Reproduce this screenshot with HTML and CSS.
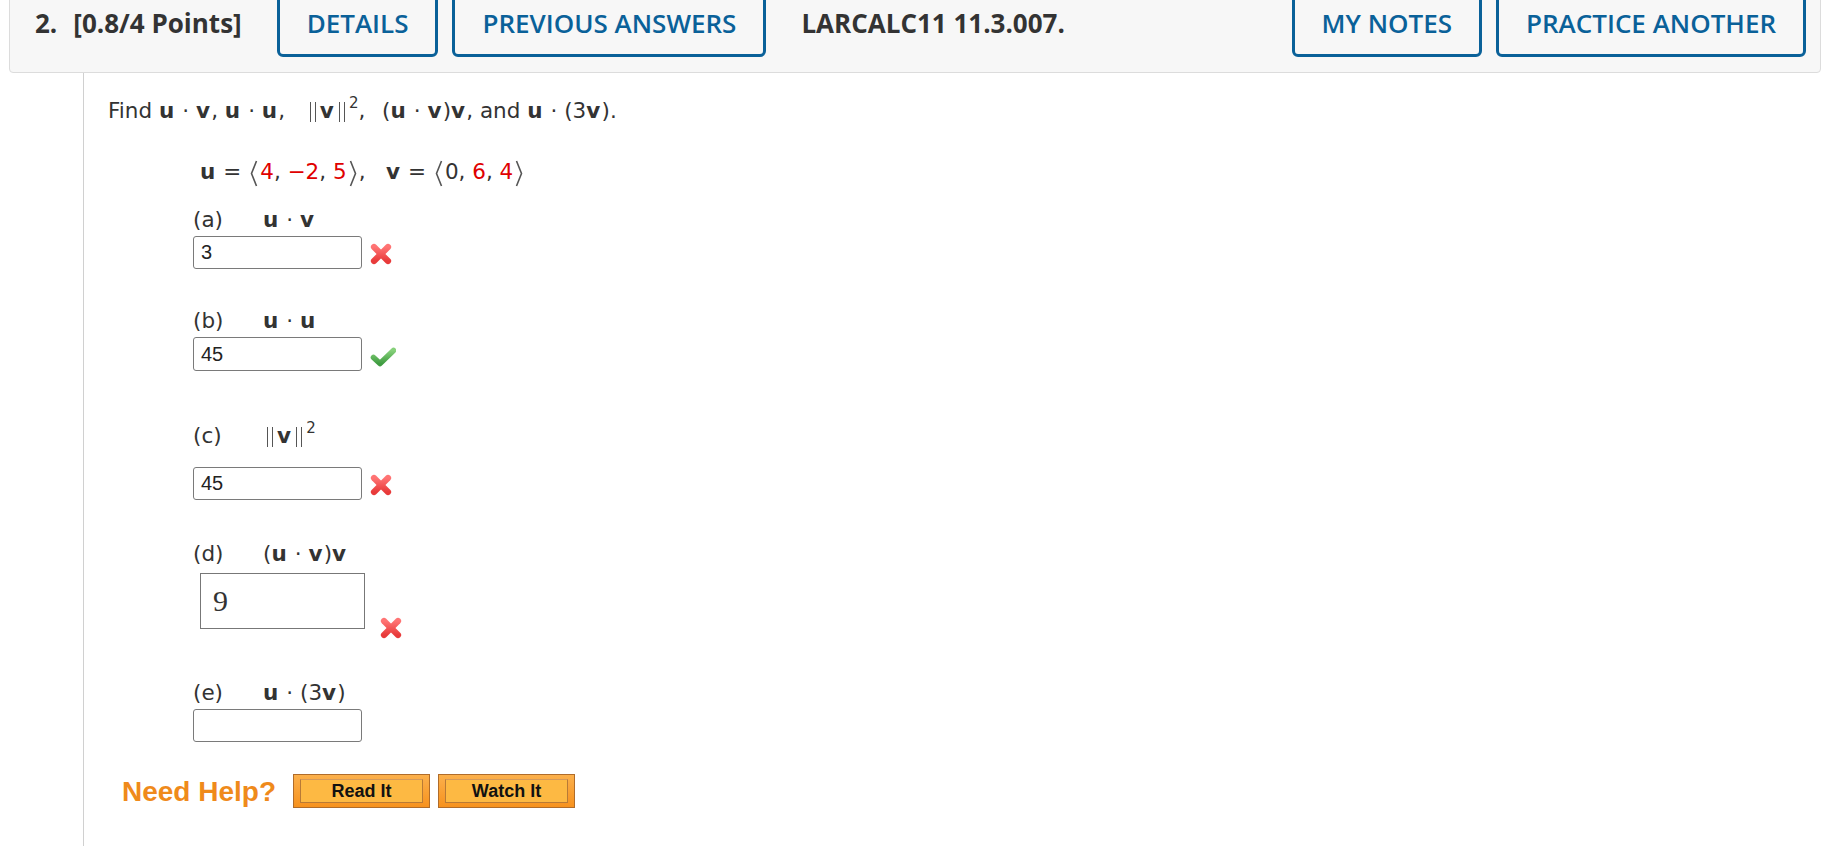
FILE: index.html
```html
<!DOCTYPE html>
<html>
<head>
<meta charset="utf-8">
<link rel="stylesheet" href="styles.css">
</head>
<body>
<div class="page">
  <div class="qhead">
    <span class="qnum">2.</span>
    <span class="pts">[0.8/4 Points]</span>
    <a class="hbtn first">DETAILS</a>
    <a class="hbtn">PREVIOUS ANSWERS</a>
    <span class="code">LARCALC11 11.3.007.</span>
    <a class="hbtn push">MY NOTES</a>
    <a class="hbtn">PRACTICE ANOTHER</a>
  </div>
  <div class="qbody">
    <div class="line find">Find <b>u</b> · <b>v</b>, <b>u</b> · <b>u</b>,&nbsp;&nbsp; <span class="bars"></span><b>v</b><span class="bars"></span><sup>2</sup>,&nbsp;<span class="gap"></span> (<b>u</b> · <b>v</b>)<b>v</b>, and <b>u</b> · (3<b>v</b>).</div>
    <div class="line vecs"><b>u</b> = <svg class="ang" viewBox="0 0 8 27"><polyline points="6.5,1 1.5,13.5 6.5,26"/></svg><span class="red">4</span>, <span class="red">−2</span>, <span class="red">5</span><svg class="ang" viewBox="0 0 8 27"><polyline points="1.5,1 6.5,13.5 1.5,26"/></svg>,&nbsp;&nbsp; <b>v</b> = <svg class="ang" viewBox="0 0 8 27"><polyline points="6.5,1 1.5,13.5 6.5,26"/></svg>0, <span class="red">6</span>, <span class="red">4</span><svg class="ang" viewBox="0 0 8 27"><polyline points="1.5,1 6.5,13.5 1.5,26"/></svg></div>

    <div class="part pa">
      <div class="line"><span class="lbl">(a)</span><b>u</b> · <b>v</b></div>
      <div class="row">
        <div class="inp">3</div>
        <svg class="xmark" viewBox="0 0 22 22"><defs><linearGradient id="rg" x1="0" y1="0" x2="0" y2="1"><stop offset="0" stop-color="#ff7474"/><stop offset="1" stop-color="#e83a3a"/></linearGradient></defs><g stroke="url(#rg)" stroke-width="6.2" stroke-linecap="round"><line x1="4" y1="4" x2="18" y2="18"/><line x1="18" y1="4" x2="4" y2="18"/></g></svg>
      </div>
    </div>

    <div class="part pb">
      <div class="line"><span class="lbl">(b)</span><b>u</b> · <b>u</b></div>
      <div class="row">
        <div class="inp tall">45</div>
        <svg class="check" viewBox="0 0 26 20"><defs><linearGradient id="gg" x1="0" y1="0" x2="0" y2="1"><stop offset="0" stop-color="#86d07a"/><stop offset="1" stop-color="#3f9c41"/></linearGradient></defs><polyline points="3.5,10.5 10,16.5 23.5,3.5" fill="none" stroke="url(#gg)" stroke-width="5.6" stroke-linejoin="round" stroke-linecap="round"/></svg>
      </div>
    </div>

    <div class="part pc">
      <div class="line"><span class="lbl">(c)</span><span class="bars"></span><b>v</b><span class="bars"></span><sup>2</sup></div>
      <div class="row rc">
        <div class="inp">45</div>
        <svg class="xmark" viewBox="0 0 22 22"><g stroke="url(#rg)" stroke-width="6.2" stroke-linecap="round"><line x1="4" y1="4" x2="18" y2="18"/><line x1="18" y1="4" x2="4" y2="18"/></g></svg>
      </div>
    </div>

    <div class="part pd">
      <div class="line"><span class="lbl">(d)</span>(<b>u</b> · <b>v</b>)<b>v</b></div>
      <div class="row rd">
        <div class="mbox">9</div>
        <svg class="xmark xd" viewBox="0 0 22 22"><g stroke="url(#rg)" stroke-width="6.2" stroke-linecap="round"><line x1="4" y1="4" x2="18" y2="18"/><line x1="18" y1="4" x2="4" y2="18"/></g></svg>
      </div>
    </div>

    <div class="part pe">
      <div class="line"><span class="lbl">(e)</span><b>u</b> · (3<b>v</b>)</div>
      <div class="row">
        <div class="inp"></div>
      </div>
    </div>

    <div class="help">
      <span class="need">Need Help?</span>
      <a class="hb"><span class="hbi">Read It</span></a>
      <a class="hb"><span class="hbi">Watch It</span></a>
    </div>
  </div>
</div>
</body>
</html>
```
FILE: styles.css
```css
html, body {
  margin: 0;
  padding: 0;
  background: #fff;
  overflow: hidden;
}
body {
  font-family: "DejaVu Sans", Verdana, sans-serif;
  color: #333;
}
.page {
  margin-top: -10px;
  padding: 0 7px 0 9px;
}
.qhead {
  display: flex;
  align-items: baseline;
  height: 81px;
  border: 1px solid #dcdcdc;
  border-radius: 0 0 4px 4px;
  background: #f7f7f7;
  padding: 0 14px 0 25px;
  font-family: "Open Sans", sans-serif;
  font-size: 26px;
  line-height: 36px;
}
.qnum, .pts, .code {
  font-weight: 700;
  color: #333;
}
.pts {
  margin-left: 16px;
}
.code {
  margin-left: 35px;
}
.hbtn {
  display: block;
  border: 3px solid #0a6199;
  border-radius: 6px;
  padding: 11px 27px 13px;
  color: #0a6199;
  font-weight: 600;
  margin-left: 14px;
}
.hbtn.first {
  margin-left: 35px;
}
.hbtn.push {
  margin-left: auto;
}
.qbody {
  margin-left: 74px;
  border-left: 1px solid #d0d0d0;
  min-height: 790px;
  padding: 24px 0 0 24px;
  font-size: 21.5px;
}
.line {
  line-height: 28px;
  height: 28px;
  white-space: nowrap;
}
.line b {
  font-weight: 700;
  letter-spacing: 1.2px;
}
.gap {
  display: inline-block;
  width: 3px;
}
.vecs {
  margin-top: 33px;
  padding-left: 92px;
}
.red {
  color: #e00000;
}
.ang {
  width: 8px;
  height: 27px;
  vertical-align: middle;
  margin: 0 2px;
}
.ang polyline {
  fill: none;
  stroke: #555;
  stroke-width: 1.6;
}
.bars {
  display: inline-block;
  width: 4px;
  height: 20px;
  border-left: 1.5px solid #555;
  border-right: 1.5px solid #555;
  vertical-align: -4px;
  margin: 0 4px;
}
sup {
  font-size: 15px;
  line-height: 0;
  vertical-align: 10px;
  margin-left: 0;
}
.part {
  padding-left: 85px;
}
.lbl {
  display: inline-block;
  width: 70px;
}
.pa { margin-top: 20px; }
.pb { margin-top: 38px; }
.pc { margin-top: 51px; }
.pd { margin-top: 40px; }
.pe { margin-top: 50px; }
.row {
  display: flex;
  align-items: center;
  margin-top: 2px;
}
.rc { margin-top: 17px; }
.rd {
  margin-top: 5px;
  align-items: flex-end;
}
.inp {
  box-sizing: border-box;
  width: 169px;
  height: 33px;
  border: 1px solid #7a7a7a;
  border-radius: 3px;
  padding: 0 7px;
  font-family: "Liberation Sans", Arial, sans-serif;
  font-size: 20px;
  line-height: 31px;
  color: #222;
}
.inp.tall {
  height: 34px;
  line-height: 32px;
}
.xmark {
  width: 22px;
  height: 22px;
  margin-left: 8px;
  margin-top: 3px;
}
.check {
  width: 26px;
  height: 20px;
  margin-left: 8px;
  margin-top: 5px;
}
.mbox {
  box-sizing: border-box;
  width: 165px;
  height: 56px;
  margin-left: 7px;
  border: 1.5px solid #777;
  padding: 0 12px;
  font-family: "Liberation Serif", "Times New Roman", serif;
  font-size: 30px;
  line-height: 53px;
  color: #333;
}
.xmark.xd {
  margin-left: 15px;
  margin-bottom: -10px;
}
.help {
  display: flex;
  align-items: center;
  margin-top: 32px;
  padding-left: 14px;
}
.need {
  font-family: "Liberation Sans", Arial, sans-serif;
  font-weight: 700;
  font-size: 28px;
  color: #ef8a1b;
  margin-right: 17px;
  margin-top: 2px;
}
.hb {
  display: block;
  box-sizing: border-box;
  width: 137px;
  height: 34px;
  border: 1px solid #b06c2a;
  background: linear-gradient(#fbb04c, #f7921e);
  padding: 4px 6px;
  margin-right: 8px;
}
.hbi {
  display: flex;
  align-items: center;
  justify-content: center;
  box-sizing: border-box;
  height: 100%;
  border: 1px solid #b87a36;
  border-top-color: #d49a5a;
  background: #fdb943;
  font-family: "Liberation Sans", Arial, sans-serif;
  font-weight: 700;
  font-size: 18px;
  color: #111;
}
```
